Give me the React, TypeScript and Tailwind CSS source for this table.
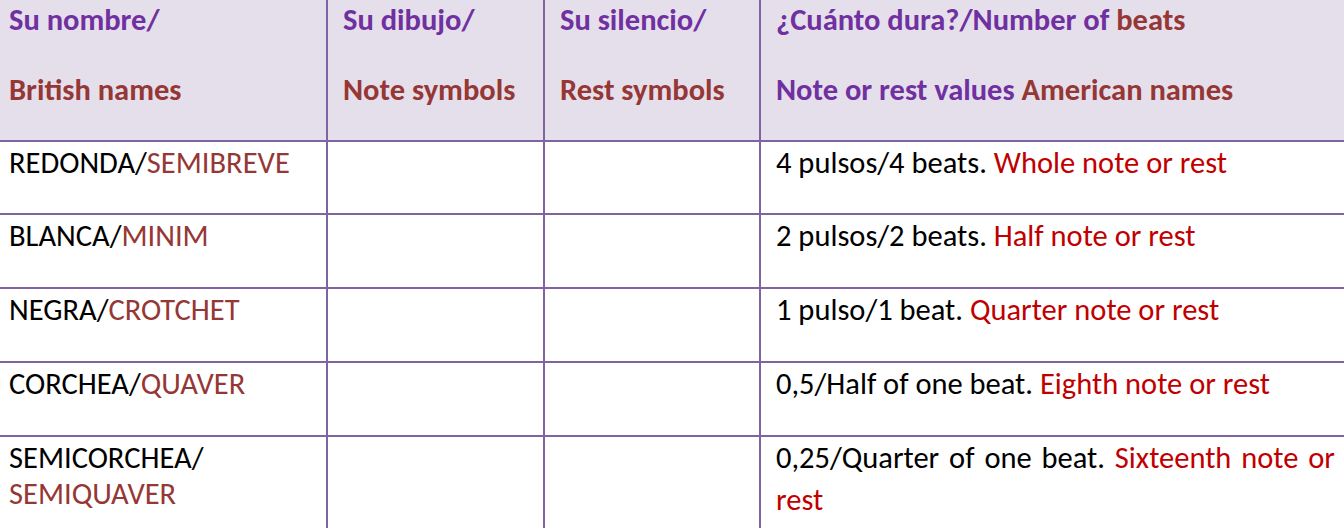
import React from "react"

const purple = "text-[#7030a0]"
const brown = "text-[#953735]"
const red = "text-[#c00000]"

const rows = [
  { es: "REDONDA/", en: "SEMIBREVE", beats: "4 pulsos/4 beats. ", us: "Whole note or rest" },
  { es: "BLANCA/", en: "MINIM", beats: "2 pulsos/2 beats. ", us: "Half note or rest" },
  { es: "NEGRA/", en: "CROTCHET", beats: "1 pulso/1 beat. ", us: "Quarter note or rest" },
  { es: "CORCHEA/", en: "QUAVER", beats: "0,5/Half of one beat. ", us: "Eighth note or rest" },
]

const cell = "border-r-2 border-b-2 border-[#8064a2]"

export default function App() {
  return (
    <div
      className="w-[1344px] h-[528px] overflow-hidden bg-white text-black text-[30.5px]"
      style={{ fontFamily: "Carlito, Calibri, Lato, sans-serif" }}
    >
      <div className="grid grid-cols-[328px_217px_216px_600px] w-[1361px]">
        {/* header */}
        <div className={`${cell} h-[142px] bg-[#e5dfec] pl-[9px] pt-[2px] font-bold leading-[35px]`}>
          <div className={purple}>Su nombre/</div>
          <div className="h-[35px]" />
          <div className={brown}>British names</div>
        </div>
        <div className={`${cell} h-[142px] bg-[#e5dfec] pl-[15px] pt-[2px] font-bold leading-[35px]`}>
          <div className={purple}>Su dibujo/</div>
          <div className="h-[35px]" />
          <div className={brown}>Note symbols</div>
        </div>
        <div className={`${cell} h-[142px] bg-[#e5dfec] pl-[15px] pt-[2px] font-bold leading-[35px]`}>
          <div className={purple}>Su silencio/</div>
          <div className="h-[35px]" />
          <div className={brown}>Rest symbols</div>
        </div>
        <div className={`${cell} h-[142px] bg-[#e5dfec] pl-[15px] pr-[24px] pt-[2px] font-bold leading-[35px]`}>
          <div>
            <span className={purple}>¿Cuánto dura?/Number of </span>
            <span className={brown}>beats</span>
          </div>
          <div className="h-[35px]" />
          <div>
            <span className={purple}>Note or rest values </span>
            <span className={brown}>American names</span>
          </div>
        </div>

        {rows.map((r, i) => (
          <React.Fragment key={r.es}>
            <div className={`${cell} ${i === 0 ? "h-[73px]" : "h-[74px]"} pl-[9px] pt-[3px] leading-[36px]`}>
              {r.es}
              <span className={brown}>{r.en}</span>
            </div>
            <div className={`${cell} ${i === 0 ? "h-[73px]" : "h-[74px]"}`} />
            <div className={`${cell} ${i === 0 ? "h-[73px]" : "h-[74px]"}`} />
            <div className={`${cell} ${i === 0 ? "h-[73px]" : "h-[74px]"} pl-[15px] pr-[24px] pt-[3px] leading-[36px]`}>
              {r.beats}
              <span className={red}>{r.us}</span>
            </div>
          </React.Fragment>
        ))}

        {/* last row, cut off by the frame */}
        <div className={`${cell} h-[120px] pl-[9px] pt-[3px] leading-[36px]`}>
          <div>SEMICORCHEA/</div>
          <div className={brown}>SEMIQUAVER</div>
        </div>
        <div className={`${cell} h-[120px]`} />
        <div className={`${cell} h-[120px]`} />
        <div className={`${cell} h-[120px] pl-[15px] pr-[24px] pt-0 leading-[42px] text-justify`}>
          0,25/Quarter of one beat. <span className={red}>Sixteenth note or rest</span>
        </div>
      </div>
    </div>
  )
}
